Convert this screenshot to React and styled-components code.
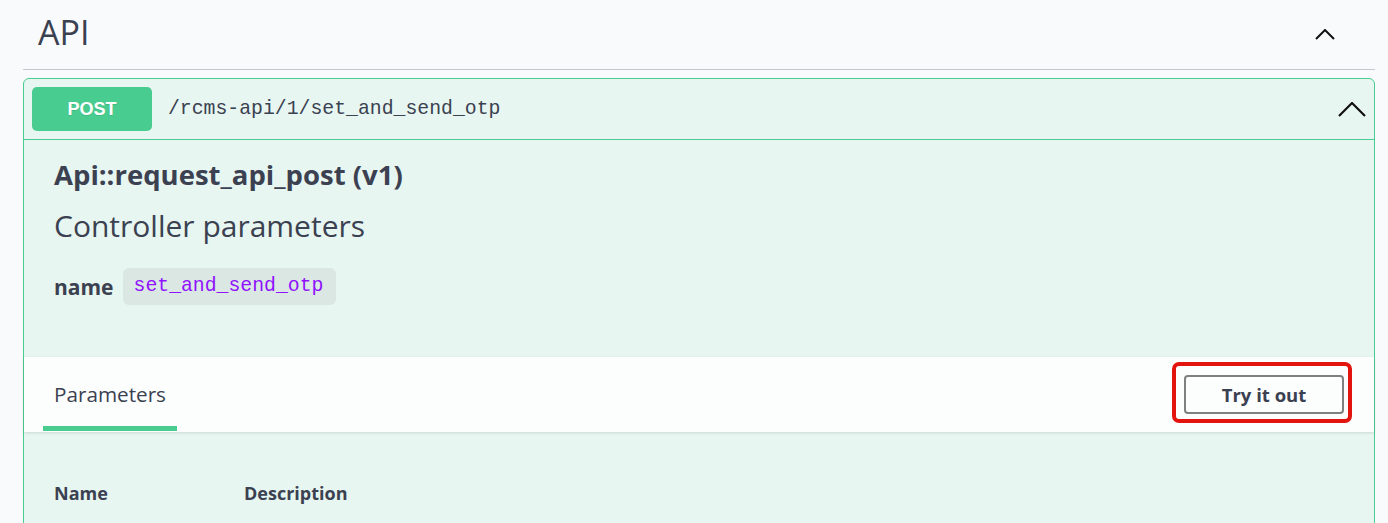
import React from "react";
import styled, { createGlobalStyle } from "styled-components";

const GlobalStyle = createGlobalStyle`
  body {
    margin: 0;
    background: #f9fafc;
    font-family: "Open Sans", "Noto Sans", sans-serif;
    color: #3b4151;
  }
`;

const Page = styled.div`
  padding: 0 13px 0 23px;
  height: 523px;
  overflow: hidden;
`;

const TagHeader = styled.div`
  height: 69px;
  display: flex;
  align-items: center;
  justify-content: space-between;
  padding: 0 40px 0 15px;
  border-bottom: 1px solid #c5c7cd;
`;

const TagTitle = styled.h3`
  margin: 0;
  font-size: 34px;
  font-weight: 400;
  color: #3b4151;
  position: relative;
  top: -3px;
`;

const Chevron = ({ w, h, stroke = 2 }) => (
  <svg width={w} height={h} viewBox={`0 0 ${w} ${h}`} fill="none">
    <polyline
      points={`1,${h - 1} ${w / 2},1 ${w - 1},${h - 1}`}
      stroke="#111"
      strokeWidth={stroke}
    />
  </svg>
);

const SmallChevron = styled.span`
  display: flex;
`;

const OpBlock = styled.div`
  margin-top: 8px;
  border: 1px solid #49cc90;
  border-radius: 6px;
  background: #e7f6f0;
`;

const Summary = styled.div`
  display: flex;
  align-items: center;
  padding: 8px 8px;
  height: 44px;
  border-bottom: 1px solid #49cc90;
`;

const Method = styled.span`
  width: 120px;
  height: 44px;
  display: flex;
  align-items: center;
  justify-content: center;
  border-radius: 5px;
  background: #49cc90;
  color: #fff;
  font-family: "Liberation Sans", sans-serif;
  font-weight: 700;
  font-size: 18px;
  text-shadow: 0 1px 0 rgba(0, 0, 0, 0.1);
`;

const Path = styled.span`
  flex: 1;
  margin-left: 16px;
  font-family: "Liberation Mono", monospace;
  font-size: 19.8px;
  color: #3b4151;
`;

const BigChevron = styled.span`
  display: flex;
`;

const Description = styled.div`
  padding: 20px 30px 40px;
  height: 157px;
`;

const OpTitle = styled.h3`
  margin: 0;
  font-size: 27.5px;
  font-weight: 700;
  line-height: 34px;
  position: relative;
  top: -2px;
`;

const Subtitle = styled.h2`
  margin: 12px 0 0;
  font-size: 30px;
  font-weight: 400;
  line-height: 40px;
`;

const NameRow = styled.p`
  margin: 22px 0 0;
  display: flex;
  align-items: center;
  gap: 9px;
  font-size: 21px;
  font-weight: 700;
`;

const Code = styled.code`
  font-family: "Liberation Mono", monospace;
  font-weight: 400;
  font-size: 19.8px;
  line-height: 23px;
  color: #9012fe;
  background: #dae7e3;
  border-radius: 6px;
  padding: 7px 13px 7px 11px;
`;

const TabHeader = styled.div`
  display: flex;
  align-items: center;
  justify-content: space-between;
  height: 75px;
  padding: 0 30px 0 19px;
  background: rgba(255, 255, 255, 0.82);
  box-shadow: 0 1px 3px rgba(0, 0, 0, 0.12);
`;

const Tab = styled.div`
  align-self: stretch;
  display: flex;
  align-items: center;
  padding: 0 11px 2px;
  font-size: 20.7px;
  position: relative;
  &::after {
    content: "";
    position: absolute;
    left: 0;
    right: 0;
    bottom: 1px;
    height: 5px;
    background: #49cc90;
  }
`;

const ButtonWrap = styled.div`
  position: relative;
  display: flex;
`;

const Highlight = styled.span`
  position: absolute;
  left: -12px;
  right: -8px;
  top: -13px;
  bottom: -9px;
  border: 4px solid #e3140e;
  border-radius: 7px;
  pointer-events: none;
`;

const TryButton = styled.button`
  width: 160px;
  height: 39px;
  border: 2px solid #808080;
  border-radius: 4px;
  background: transparent;
  font-family: "Open Sans", sans-serif;
  font-weight: 700;
  font-size: 18.5px;
  color: #3b4151;
  padding-bottom: 2px;
`;

const TableHead = styled.div`
  display: grid;
  grid-template-columns: 190px 1fr;
  padding: 49px 30px 80px;
  font-size: 18px;
  font-weight: 700;
`;

export default function App() {
  return (
    <Page>
      <GlobalStyle />
      <TagHeader>
        <TagTitle>API</TagTitle>
        <SmallChevron>
          <Chevron w={20} h={11} />
        </SmallChevron>
      </TagHeader>
      <OpBlock>
        <Summary>
          <Method>POST</Method>
          <Path>/rcms-api/1/set_and_send_otp</Path>
          <BigChevron>
            <Chevron w={28} h={15} stroke={2.2} />
          </BigChevron>
        </Summary>
        <Description>
          <OpTitle>Api::request_api_post (v1)</OpTitle>
          <Subtitle>Controller parameters</Subtitle>
          <NameRow>
            name <Code>set_and_send_otp</Code>
          </NameRow>
        </Description>
        <TabHeader>
          <Tab>Parameters</Tab>
          <ButtonWrap>
            <Highlight />
            <TryButton>Try it out</TryButton>
          </ButtonWrap>
        </TabHeader>
        <TableHead>
          <span>Name</span>
          <span>Description</span>
        </TableHead>
      </OpBlock>
    </Page>
  );
}
